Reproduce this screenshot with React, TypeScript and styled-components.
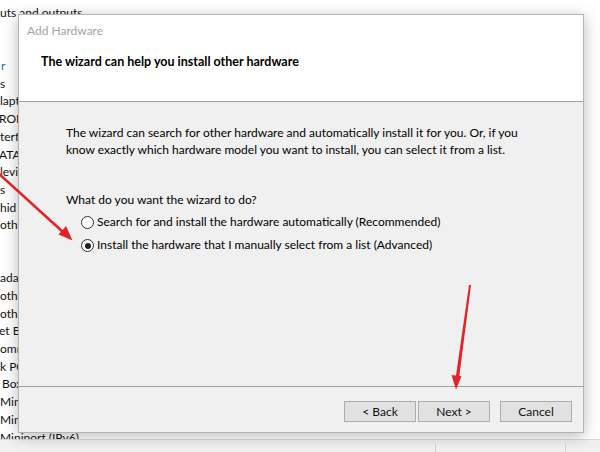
import React from "react";
import styled, { createGlobalStyle } from "styled-components";

const GlobalStyle = createGlobalStyle`
  html, body {
    margin: 0;
    padding: 0;
    width: 600px;
    height: 452px;
    overflow: hidden;
    background: #ffffff;
  }
  * { box-sizing: border-box; }
`;

const UI_FONT = `Lato, "Noto Sans", "Liberation Sans", sans-serif`;

const Screen = styled.div`
  position: relative;
  width: 600px;
  height: 452px;
  display: flex;
  flex-direction: column;
  font-family: ${UI_FONT};
  font-size: 12px;
  color: #000;
  overflow: hidden;
`;

const DeviceList = styled.div`
  flex: 1;
  overflow: hidden;
  padding-top: 4px;
  background: #ffffff;
`;

const TreeRow = styled.div<{ $tone?: "link"; $shift?: number }>`
  height: 17.7px;
  line-height: 17.7px;
  white-space: nowrap;
  margin-left: ${(p) => p.$shift ?? 0}px;
  color: ${(p) => (p.$tone === "link" ? "#1b6ac9" : "#111")};
`;

const StatusBar = styled.div`
  height: 13px;
  flex: none;
  display: grid;
  grid-template-columns: 435px 130px 1fr;
  background: #f0f0f0;
  border-top: 1px solid #dadada;
  padding-top: 3px;
`;

const StatusCell = styled.div<{ $divider?: boolean }>`
  border-left: ${(p) => (p.$divider ? "1px solid #d4d4d4" : "none")};
`;

const Dialog = styled.div`
  position: absolute;
  left: 18px;
  top: 14px;
  width: 566px;
  height: 419px;
  display: flex;
  flex-direction: column;
  background: #f0f0f0;
  border: 1px solid #b4b4b4;
  box-shadow: 0 3px 14px rgba(0, 0, 0, 0.28);
`;

const TitleBar = styled.div`
  height: 30px;
  flex: none;
  display: flex;
  align-items: center;
  padding-left: 8px;
  background: #ffffff;
  color: #a3a3a3;
  font-size: 12px;
`;

const Header = styled.div`
  height: 57px;
  flex: none;
  background: #ffffff;
  border-bottom: 1px solid #a0a0a0;
  padding: 9px 0 0 22px;
  font-weight: 700;
  font-size: 12.5px;
  line-height: 16px;
`;

const Body = styled.div`
  flex: 1;
  display: flex;
  flex-direction: column;
  padding: 23px 0 0 47px;
  line-height: 16.5px;
`;

const Paragraph = styled.p`
  margin: 0;
  width: 460px;
`;

const Question = styled.p`
  margin: 34px 0 0 0;
`;

const RadioList = styled.div`
  display: flex;
  flex-direction: column;
  gap: 7px;
  margin: 6px 0 0 15px;
`;

const RadioRow = styled.label`
  display: flex;
  align-items: center;
  gap: 3px;
  height: 16px;
`;

const RadioCircle = styled.span<{ $checked?: boolean }>`
  width: 13px;
  height: 13px;
  border-radius: 50%;
  border: 1px solid #333;
  background: #fff;
  display: flex;
  align-items: center;
  justify-content: center;
  flex: none;
  &::after {
    content: "";
    width: 6px;
    height: 6px;
    border-radius: 50%;
    background: ${(p) => (p.$checked ? "#222" : "transparent")};
  }
`;

const Footer = styled.div`
  height: 46px;
  flex: none;
  display: flex;
  justify-content: flex-end;
  align-items: flex-start;
  padding: 14px 11px 0 0;
  border-top: 1px solid #a0a0a0;
`;

const ButtonPair = styled.div`
  display: flex;
  gap: 2px;
  margin-right: 10px;
`;

const WinButton = styled.button`
  width: 72px;
  height: 21px;
  padding: 0;
  background: #e1e1e1;
  border: 1px solid #adadad;
  font-family: ${UI_FONT};
  font-size: 12px;
  color: #111;
  display: flex;
  align-items: center;
  justify-content: center;
`;

const Annotations = styled.svg`
  position: absolute;
  left: 0;
  top: 0;
  pointer-events: none;
`;

const rows: { text: string; tone?: "link"; shift?: number }[] = [
  { text: "uts and outputs" },
  { text: "" },
  { text: "" },
  { text: "r", tone: "link", shift: 1 },
  { text: "s" },
  { text: "lapters" },
  { text: "ROM drives", shift: -1 },
  { text: "terfaces" },
  { text: "ATAPI controllers", shift: -1 },
  { text: "levices" },
  { text: "s" },
  { text: "hid Interface" },
  { text: "oth devices" },
  { text: "" },
  { text: "" },
  { text: "adapters" },
  { text: "oth Device" },
  { text: "oth Device" },
  { text: "et Bridge", shift: -1 },
  { text: "ommunications" },
  { text: "k PC" },
  { text: " Box", shift: 2 },
  { text: "Miniport" },
  { text: "Miniport" },
  { text: "Miniport (IPv6)" },
];

const RED = "#e2232a";

export default function App() {
  return (
    <Screen>
      <GlobalStyle />
      <DeviceList>
        {rows.map((r, i) => (
          <TreeRow key={i} $tone={r.tone} $shift={r.shift}>
            {r.text || "\u00a0"}
          </TreeRow>
        ))}
      </DeviceList>
      <StatusBar>
        <StatusCell />
        <StatusCell $divider />
        <StatusCell $divider />
      </StatusBar>

      <Dialog>
        <TitleBar>Add Hardware</TitleBar>
        <Header>The wizard can help you install other hardware</Header>
        <Body>
          <Paragraph>
            The wizard can search for other hardware and automatically install it for you. Or, if you
            know exactly which hardware model you want to install, you can select it from a list.
          </Paragraph>
          <Question>What do you want the wizard to do?</Question>
          <RadioList>
            <RadioRow>
              <RadioCircle />
              Search for and install the hardware automatically (Recommended)
            </RadioRow>
            <RadioRow>
              <RadioCircle $checked />
              Install the hardware that I manually select from a list (Advanced)
            </RadioRow>
          </RadioList>
        </Body>
        <Footer>
          <ButtonPair>
            <WinButton>&lt; Back</WinButton>
            <WinButton>Next &gt;</WinButton>
          </ButtonPair>
          <WinButton>Cancel</WinButton>
        </Footer>
      </Dialog>

      <Annotations width={600} height={452} viewBox="0 0 600 452">
        <line x1={-3} y1={172} x2={63} y2={232} stroke={RED} strokeWidth={2.6} strokeLinecap="round" />
        <polygon points="72.5,240.5 58.5,234.5 66,226" fill={RED} />
        <polygon points="469,285 471,285 459.2,377 455.8,377" fill={RED} />
        <polygon points="456,389.5 451.5,375 461.5,376.2" fill={RED} />
      </Annotations>
    </Screen>
  );
}
